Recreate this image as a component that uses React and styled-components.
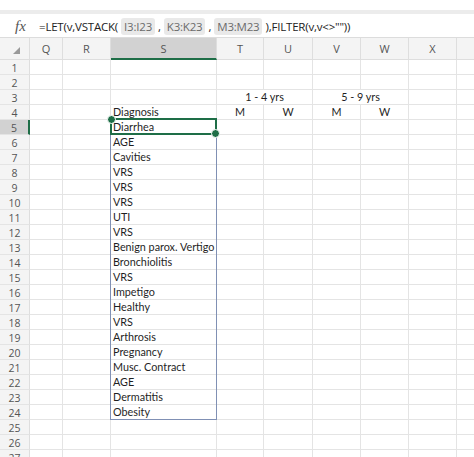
import React from "react";
import styled, { createGlobalStyle } from "styled-components";

const Global = createGlobalStyle`
  html, body { margin: 0; padding: 0; background: #fff; }
  body { font-family: "Open Sans", "Liberation Sans", sans-serif; overflow: hidden; }
`;

const COLS = [30, 33, 48, 106, 47, 49, 48, 48, 48, 60];
const LETTERS = ["", "Q", "R", "S", "T", "U", "V", "W", "X", ""];
const gridTemplate = COLS.map((w) => `${w}px`).join(" ");

const Page = styled.div`
  width: 474px;
  height: 457px;
  overflow: hidden;
  display: flex;
  flex-direction: column;
`;

const TopStrip = styled.div`
  height: 15px;
  flex: none;
  display: flex;
  flex-direction: column;
  justify-content: flex-end;
`;

const TopBand = styled.div`
  height: 4px;
  margin-bottom: 1px;
  background: #ececec;
`;

const FormulaBar = styled.div`
  height: 23px;
  flex: none;
  display: flex;
  align-items: center;
  border-bottom: 1px solid #dcdcdc;
  box-sizing: border-box;
`;

const Fx = styled.div`
  width: 37px;
  flex: none;
  text-align: center;
  font-family: "Liberation Serif", serif;
  font-style: italic;
  font-size: 15px;
  color: #555;
  padding-left: 2px;
`;

const FormulaText = styled.div`
  font-family: "Open Sans", "Liberation Sans", sans-serif;
  font-size: 11.5px;
  color: #222;
  white-space: nowrap;
  display: flex;
  align-items: center;
  letter-spacing: -0.2px;
`;

const Token = styled.span`
  background: #e9e9e9;
  color: #6b6b6b;
  border-radius: 3px;
  padding: 1px 3px;
  margin: 0 3px;
`;

const Sheet = styled.div`
  display: grid;
  grid-template-columns: ${gridTemplate};
  grid-template-rows: 22px;
  grid-auto-rows: 15px;
  flex: none;
`;

const HeadCell = styled.div`
  box-sizing: border-box;
  background: ${(p) => (p.$active ? "#d2d2d2" : "#f4f4f4")};
  border-right: 1px solid #dedede;
  border-bottom: ${(p) => (p.$active ? "2px solid #1e6e47" : "1px solid #dedede")};
  display: flex;
  align-items: center;
  justify-content: center;
  font-family: "Open Sans", "Liberation Sans", sans-serif;
  font-size: 11px;
  color: #555;
`;

const Corner = styled(HeadCell)`
  position: relative;
`;

const Tri = styled.div`
  width: 0;
  height: 0;
  border-left: 7px solid transparent;
  border-bottom: 7px solid #9a9a9a;
  margin-left: 4px;
  margin-top: 4px;
`;

const RowHead = styled.div`
  box-sizing: border-box;
  background: ${(p) => (p.$active ? "#d2d2d2" : "#f4f4f4")};
  border-right: ${(p) => (p.$active ? "2px solid #1e6e47" : "1px solid #dedede")};
  border-bottom: 1px solid #e4e4e4;
  display: flex;
  align-items: center;
  justify-content: center;
  font-family: "Open Sans", "Liberation Sans", sans-serif;
  font-size: 10.5px;
  color: #555;
  padding-top: 1px;
`;

const Cell = styled.div`
  position: relative;
  box-sizing: border-box;
  border-right: 1px solid #e4e4e4;
  border-bottom: 1px solid #e4e4e4;
  font-family: "Lato", "Open Sans", sans-serif;
  font-size: 10.8px;
  color: #1f1f1f;
  line-height: 14px;
  padding-left: 2px;
  white-space: nowrap;
  overflow: visible;
  display: flex;
  align-items: flex-end;
  justify-content: ${(p) => (p.$center ? "center" : "flex-start")};
  ${(p) => (p.$center ? "padding-left: 0;" : "")}
`;

const SpanText = styled.span`
  position: relative;
  z-index: 2;
`;

const CenterAcross = styled.div`
  grid-column: span 2;
  box-sizing: border-box;
  border-bottom: 1px solid #e4e4e4;
  border-right: 1px solid #e4e4e4;
  font-family: "Lato", "Open Sans", sans-serif;
  font-size: 10.8px;
  color: #1f1f1f;
  line-height: 14px;
  display: flex;
  align-items: flex-end;
  justify-content: center;
`;

const Spill = styled.div`
  position: absolute;
  left: -1px;
  top: -1px;
  width: 107px;
  height: 301px;
  border: 1px solid #8090b4;
  box-sizing: border-box;
  pointer-events: none;
  z-index: 3;
`;

const Selection = styled.div`
  position: absolute;
  left: -1px;
  top: -2px;
  width: 107px;
  height: 17px;
  border: 2px solid #1e6e47;
  box-sizing: border-box;
  z-index: 4;
  pointer-events: none;
`;

const Dot = styled.div`
  position: absolute;
  width: 7px;
  height: 7px;
  border-radius: 50%;
  background: #1e6e47;
  border: 1px solid #fff;
  z-index: 5;
  ${(p) => (p.$tl ? "left: -5px; top: -5px;" : "right: -5px; bottom: -5px;")}
`;

const diag = [
  "Diarrhea",
  "AGE",
  "Cavities",
  "VRS",
  "VRS",
  "VRS",
  "UTI",
  "VRS",
  "Benign parox. Vertigo",
  "Bronchiolitis",
  "VRS",
  "Impetigo",
  "Healthy",
  "VRS",
  "Arthrosis",
  "Pregnancy",
  "Musc. Contract",
  "AGE",
  "Dermatitis",
  "Obesity",
];

function Row({ n }) {
  const cells = [];
  if (n === 3) {
    cells.push(<Cell key="q" />, <Cell key="r" />, <Cell key="s" />);
    cells.push(
      <CenterAcross key="tu">1 - 4 yrs</CenterAcross>,
      <CenterAcross key="vw">5 - 9 yrs</CenterAcross>,
      <Cell key="x" />,
      <Cell key="y" />
    );
  } else {
    for (let c = 1; c < COLS.length; c++) {
      let content = null;
      let center = false;
      let extra = null;
      if (c === 3) {
        if (n === 4) content = "Diagnosis";
        if (n >= 5 && n <= 24) content = diag[n - 5];
        if (n === 5) {
          extra = (
            <>
              <Spill />
              <Selection>
                <Dot $tl />
                <Dot />
              </Selection>
            </>
          );
        }
      }
      if (n === 4 && (c === 4 || c === 6)) {
        content = "M";
        center = true;
      }
      if (n === 4 && (c === 5 || c === 7)) {
        content = "W";
        center = true;
      }
      cells.push(
        <Cell key={c} $center={center}>
          {content && <SpanText>{content}</SpanText>}
          {extra}
        </Cell>
      );
    }
  }
  return (
    <>
      <RowHead $active={n === 5}>{n}</RowHead>
      {cells}
    </>
  );
}

export default function App() {
  const rows = Array.from({ length: 27 }, (_, i) => i + 1);
  return (
    <>
      <Global />
      <Page>
        <TopStrip>
          <TopBand />
        </TopStrip>
        <FormulaBar>
          <Fx>fx</Fx>
          <FormulaText>
            =LET(v,VSTACK(<Token>I3:I23</Token>,<Token>K3:K23</Token>,
            <Token>M3:M23</Token>),FILTER(v,v&lt;&gt;""))
          </FormulaText>
        </FormulaBar>
        <Sheet>
          {LETTERS.map((l, i) =>
            i === 0 ? (
              <Corner key={i}>
                <Tri />
              </Corner>
            ) : (
              <HeadCell key={i} $active={l === "S"}>
                {l}
              </HeadCell>
            )
          )}
          {rows.map((n) => (
            <Row key={n} n={n} />
          ))}
        </Sheet>
      </Page>
    </>
  );
}
